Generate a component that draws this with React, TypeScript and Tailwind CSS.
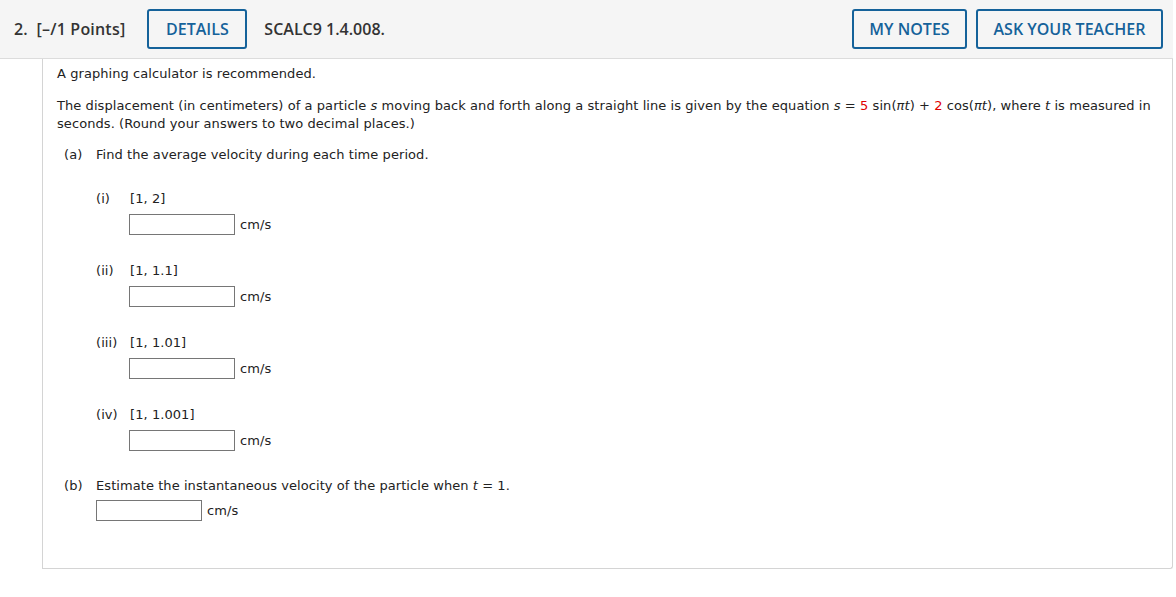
import React from "react";

const body = { fontFamily: "Verdana, 'DejaVu Sans', sans-serif" };

const parts = [
  { roman: "(i)", range: "[1, 2]" },
  { roman: "(ii)", range: "[1, 1.1]" },
  { roman: "(iii)", range: "[1, 1.01]" },
  { roman: "(iv)", range: "[1, 1.001]" },
];

const Answer = () => (
  <div className="flex items-center gap-[5px]">
    <input className="w-[106px] h-[21px] border border-[#767676] bg-white outline-none" />
    <span>cm/s</span>
  </div>
);

const App = () => {
  return (
    <div className="w-[1176px] min-h-[597px] bg-white text-[#222]">
      <header
        className="flex items-center h-[59px] bg-[#f5f5f5] border-b border-[#dcdcdc] pl-[14px] pr-[10px] mr-[3px] text-[16px] font-semibold"
        style={{ fontFamily: "'Open Sans', sans-serif" }}
      >
        <span className="text-[#333]">2.</span>
        <span className="ml-[9px] text-[#333] tracking-[0.2px]">[–/1 Points]</span>
        <button className="ml-[22px] h-[40px] w-[100px] border-2 border-[#15629a] rounded-[3px] text-[#15629a]">
          DETAILS
        </button>
        <span className="ml-[17px] text-[#333]">SCALC9 1.4.008.</span>
        <div className="flex-1" />
        <button className="h-[40px] w-[115px] border-2 border-[#15629a] rounded-[3px] text-[#15629a]">
          MY NOTES
        </button>
        <button className="ml-[9px] h-[40px] w-[187px] border-2 border-[#15629a] rounded-[3px] text-[#15629a]">
          ASK YOUR TEACHER
        </button>
      </header>

      <div
        className="ml-[42px] mr-[3px] h-[510px] border-l border-r border-b border-[#d4d4d4] rounded-br-[3px] pl-[14px] pr-[10px] pt-[6px] text-[13px] leading-[18px] tracking-[0.07px]"
        style={body}
      >
        <p>A graphing calculator is recommended.</p>
        <p className="mt-[14px]">
          The displacement (in centimeters) of a particle <i>s</i> moving back and forth along a
          straight line is given by the equation <i>s</i> = <span className="text-[#e00000]">5</span>{" "}
          sin(<i>πt</i>) + <span className="text-[#e00000]">2</span> cos(<i>πt</i>), where <i>t</i> is
          measured in seconds. (Round your answers to two decimal places.)
        </p>

        <div className="mt-[13px] ml-[7px] flex">
          <span className="w-[32px]">(a)</span>
          <span>Find the average velocity during each time period.</span>
        </div>

        <div className="ml-[39px] mt-[26px] flex flex-col gap-[27px]">
          {parts.map((p) => (
            <div key={p.roman}>
              <div className="flex">
                <span className="w-[34px]">{p.roman}</span>
                <span>{p.range}</span>
              </div>
              <div className="ml-[33px] mt-[6px]">
                <Answer />
              </div>
            </div>
          ))}
        </div>

        <div className="mt-[26px] ml-[7px] flex">
          <span className="w-[32px]">(b)</span>
          <span>
            Estimate the instantaneous velocity of the particle when <i>t</i> = 1.
          </span>
        </div>
        <div className="ml-[39px] mt-[5px]">
          <Answer />
        </div>
      </div>
    </div>
  );
};

export default App;
